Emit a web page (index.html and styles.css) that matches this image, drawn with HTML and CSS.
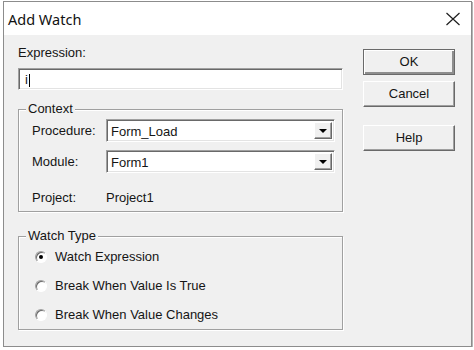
FILE: index.html
```html
<!doctype html>
<html lang="en">

<head>
    <meta charset="UTF-8">
    <title>Add Watch</title>
    <link rel="stylesheet" href="styles.css">
</head>

<body>
    <div class="window">
        <div class="titlebar">
            <span class="title">Add Watch</span>
            <svg class="close" width="16" height="14" viewBox="0 0 16 14">
                <path d="M1.5 1 L14.5 13 M14.5 1 L1.5 13" stroke="#1e1e1e" stroke-width="1.2" fill="none" />
            </svg>
        </div>
        <div class="dialog">
            <div class="main">
                <div class="field-label">Expression:</div>
                <div class="textbox"><span>i</span><span class="caret"></span></div>

                <fieldset class="group context">
                    <legend>Context</legend>
                    <div class="row">
                        <span class="row-label">Procedure:</span>
                        <div class="combo">
                            <span class="combo-value">Form_Load</span>
                            <span class="combo-btn"><span class="arrow"></span></span>
                        </div>
                    </div>
                    <div class="row">
                        <span class="row-label">Module:</span>
                        <div class="combo">
                            <span class="combo-value">Form1</span>
                            <span class="combo-btn"><span class="arrow"></span></span>
                        </div>
                    </div>
                    <div class="row project">
                        <span class="row-label">Project:</span>
                        <span>Project1</span>
                    </div>
                </fieldset>

                <fieldset class="group watch-type">
                    <legend>Watch Type</legend>
                    <div class="radio"><span class="radio-dot checked"></span>Watch Expression</div>
                    <div class="radio"><span class="radio-dot"></span>Break When Value Is True</div>
                    <div class="radio"><span class="radio-dot"></span>Break When Value Changes</div>
                </fieldset>
            </div>
            <div class="buttons">
                <button type="button" class="btn default">OK</button>
                <button type="button" class="btn">Cancel</button>
                <button type="button" class="btn help">Help</button>
            </div>
        </div>
    </div>
</body>

</html>
```

FILE: styles.css
```css
body {
    margin: 0;
    background: #fff;
    font-family: 'Liberation Sans', Arial, sans-serif;
    font-size: 13px;
    line-height: 16px;
    color: #151515;
}

.window {
    margin: 1px 0 0 3px;
    width: 467px;
    height: 344px;
    border: 1px solid #8c8c8c;
    box-shadow: 1px 1px 0 #b4b4b4;
    background: #f0f0f0;
    display: flex;
    flex-direction: column;
}

.titlebar {
    height: 33px;
    background: #fff;
    display: flex;
    align-items: center;
    justify-content: space-between;
    padding: 0 10px 0 4px;
}

.title {
    font-family: 'Noto Sans', sans-serif;
    font-size: 14.5px;
    color: #111;
}

.close {
    display: block;
}

.dialog {
    flex: 1;
    display: flex;
    gap: 20px;
    padding: 10px 16px 15px 14px;
}

.main {
    width: 325px;
}

.field-label {
    height: 16px;
}

.textbox {
    margin-top: 7px;
    height: 22px;
    box-sizing: border-box;
    background: #fff;
    border: 1px solid;
    border-color: #a0a0a0 #fff #fff #a0a0a0;
    box-shadow: inset 1px 1px 0 #696969, inset -1px -1px 0 #e3e3e3;
    padding: 2px 0 0 6px;
    display: flex;
    align-items: center;
}

.caret {
    width: 1px;
    height: 13px;
    background: #000;
    margin-left: 1px;
}

.group {
    margin: 0;
    min-width: 0;
    border: 1px solid #a0a0a0;
    box-shadow: 1px 1px 0 #fff, inset 1px 1px 0 #fff;
    padding: 2px 7px 5px 7px;
}

.group legend {
    padding: 0 2px;
    height: 16px;
    background: #f0f0f0;
}

.context {
    margin-top: 11px;
}

.row {
    display: flex;
    align-items: center;
    margin-left: 6px;
}

.row + .row {
    margin-top: 8px;
}

.row.project {
    margin-top: 17px;
}

.row-label {
    width: 74px;
    flex-shrink: 0;
}

.combo {
    flex: 1;
    height: 23px;
    box-sizing: border-box;
    background: #fff;
    border: 1px solid;
    border-color: #a0a0a0 #fff #fff #a0a0a0;
    box-shadow: inset 1px 1px 0 #696969, inset -1px -1px 0 #e3e3e3;
    display: flex;
    align-items: stretch;
    padding: 2px 2px 2px 4px;
}

.combo-value {
    flex: 1;
    line-height: 19px;
}

.combo-btn {
    width: 18px;
    box-sizing: border-box;
    background: #f0f0f0;
    border: 1px solid;
    border-color: #fff #696969 #696969 #fff;
    box-shadow: inset -1px -1px 0 #a0a0a0;
    display: flex;
    align-items: center;
    justify-content: center;
}

.arrow {
    width: 0;
    height: 0;
    border-left: 4px solid transparent;
    border-right: 4px solid transparent;
    border-top: 4px solid #000;
    margin-top: 1px;
}

.watch-type {
    margin-top: 16px;
    padding: 3px 7px 4px 7px;
}

.radio {
    height: 20px;
    display: flex;
    align-items: center;
    margin-left: 9px;
}

.radio + .radio {
    margin-top: 9px;
}

.radio-dot {
    width: 12px;
    height: 12px;
    box-sizing: border-box;
    border-radius: 50%;
    background: #fff;
    border: 1px solid;
    border-color: #a0a0a0 #fff #fff #a0a0a0;
    box-shadow: inset 1px 1px 0 #696969;
    margin-right: 8px;
    display: flex;
    align-items: center;
    justify-content: center;
}

.radio-dot.checked::after {
    content: "";
    width: 4px;
    height: 4px;
    border-radius: 50%;
    background: #000;
}

.buttons {
    width: 92px;
    display: flex;
    flex-direction: column;
    padding-top: 4px;
}

.btn {
    height: 26px;
    font: inherit;
    color: inherit;
    background: #f0f0f0;
    border: 1px solid;
    border-color: #fff #696969 #696969 #fff;
    box-shadow: inset -1px -1px 0 #a0a0a0;
    padding: 0;
}

.btn.default {
    border-color: #6a6a6a;
    box-shadow: inset 1px 1px 0 #fff, inset -2px -2px 0 #8e8e8e;
}

.btn + .btn {
    margin-top: 6px;
}

.btn.help {
    margin-top: 18px;
}
```
